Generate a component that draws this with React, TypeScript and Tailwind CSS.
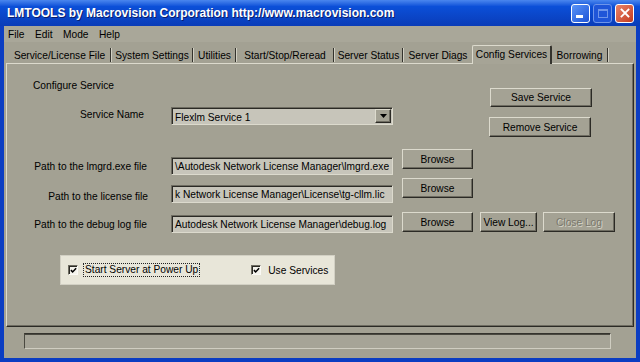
import React from "react";

function Btn({ className, children, disabled }: { className: string; children: React.ReactNode; disabled?: boolean }) {
  return (
    <div
      className={`flex items-center justify-center shrink-0 border border-t-[#dcdacd] border-l-[#dcdacd] border-r-[#2b2a25] border-b-[#2b2a25] shadow-[inset_-1px_-1px_0_#6e6c61] bg-[#a4a294] ${
        disabled ? "text-[#7a786d] [text-shadow:1px_1px_0_#d6d4c7]" : "text-black"
      } ${className}`}
    >
      {children}
    </div>
  );
}

function Field({ className, children }: { className: string; children: React.ReactNode }) {
  return (
    <div
      className={`flex items-center shrink-0 overflow-hidden whitespace-nowrap border border-t-[#6e6c61] border-l-[#6e6c61] border-b-[#dcdacd] border-r-[#dcdacd] shadow-[inset_1px_1px_0_#2b2a25] bg-[#c7c5ba] pl-[3px] ${className}`}
    >
      {children}
    </div>
  );
}

function Check() {
  return (
    <div className="w-[10px] h-[10px] shrink-0 bg-[#f4f3ec] border border-t-[#6e6c61] border-l-[#6e6c61] border-b-[#fbfaf5] border-r-[#fbfaf5] shadow-[inset_1px_1px_0_#2b2a25] flex items-center justify-center">
      <svg viewBox="0 0 8 8" className="w-[7px] h-[7px]">
        <path d="M1 3.6 L3 5.6 L7 1.4" stroke="#000" strokeWidth="1.7" fill="none" />
      </svg>
    </div>
  );
}

const tabs = [
  { label: "Service/License File", w: "w-[103px]", sep: true },
  { label: "System Settings", w: "w-[82px]", sep: true },
  { label: "Utilities", w: "w-[43px]", sep: true },
  { label: "Start/Stop/Reread", w: "w-[98px]", sep: true },
  { label: "Server Status", w: "w-[69px]", sep: true },
  { label: "Server Diags", w: "w-[68px]", sep: false },
];

export default function App() {
  return (
    <div className="w-[640px] h-[362px] flex flex-col bg-[#0b3dc2] font-['Liberation_Sans',Arial,sans-serif] text-[10.2px] leading-[13px] text-black overflow-hidden select-none">
      {/* Title bar */}
      <div className="h-[26px] shrink-0 flex items-center pl-[7px] pr-[6px] bg-linear-to-b from-[#4a86ee] via-[#0b4fd8] via-25% to-[#0a3cb8]">
        <span className="text-white font-bold text-[12px] leading-[14px] [text-shadow:1px_1px_0_#0a1d6b]">
          LMTOOLS by Macrovision Corporation http://www.macrovision.com
        </span>
        <div className="ml-auto flex gap-[3px] items-center">
          <div className="w-[19px] h-[19px] rounded-[3px] border border-white bg-linear-to-br from-[#5a93f7] to-[#1d52d6] flex items-end pl-[4px] pb-[4px]">
            <div className="w-[7px] h-[3px] bg-white" />
          </div>
          <div className="w-[19px] h-[19px] rounded-[3px] border border-[#6e95ea] bg-[#1f55d8] flex items-center justify-center">
            <div className="w-[10px] h-[9px] border border-t-2 border-[#6e95ea]" />
          </div>
          <div className="w-[19px] h-[19px] rounded-[3px] border border-white bg-linear-to-br from-[#e8836a] to-[#c4381b] flex items-center justify-center">
            <svg viewBox="0 0 10 10" className="w-[10px] h-[10px]">
              <path d="M1.5 1.5 L8.5 8.5 M8.5 1.5 L1.5 8.5" stroke="#fff" strokeWidth="1.8" strokeLinecap="square" />
            </svg>
          </div>
        </div>
      </div>

      {/* Body */}
      <div className="flex-1 mx-[4px] mb-[4px] bg-[#a3a193] flex flex-col">
        {/* Menu */}
        <div className="h-[16px] shrink-0 flex items-center pl-[4px] bg-[#a9a799]">
          <span className="w-[27px]">File</span>
          <span className="w-[28px]">Edit</span>
          <span className="w-[36px]">Mode</span>
          <span>Help</span>
        </div>

        {/* Tabs */}
        <div className="h-[21px] shrink-0 flex items-end pl-[5px]">
          {tabs.map((t) => (
            <div key={t.label} className={`h-[16px] flex items-center ${t.w}`}>
              <span className="flex-1 text-center whitespace-nowrap">{t.label}</span>
              {t.sep && <span className="w-[2px] h-[14px] border-l border-l-[#34332d] border-r border-r-[#d2d0c3]" />}
            </div>
          ))}
          <div className="relative z-10 w-[80px] h-[19px] -mb-px flex items-start justify-center pt-[2px] bg-[#a6a496] border-t border-l border-t-[#dcdacd] border-l-[#dcdacd] border-r-2 border-r-[#34332d] rounded-t-[2px]">
            <span className="whitespace-nowrap">Config Services</span>
          </div>
          <div className="h-[16px] w-[57px] flex items-center">
            <span className="flex-1 text-center whitespace-nowrap">Borrowing</span>
            <span className="w-[2px] h-[14px] border-l border-l-[#34332d] border-r border-r-[#d2d0c3]" />
          </div>
        </div>

        {/* Panel */}
        <div className="h-[264px] shrink-0 mx-[2px] flex flex-col border border-t-[#dcdacd] border-l-[#dcdacd] border-r-[#2b2a25] border-b-[#2b2a25] shadow-[inset_-1px_-1px_0_#6e6c61]">
          {/* Top section */}
          <div className="flex">
            <div className="w-[386px] flex flex-col">
              <div className="mt-[15px] pl-[26px]">Configure Service</div>
              <div className="mt-[15px] flex items-start">
                <div className="w-[137px] text-right mt-[1px]">Service Name</div>
                <Field className="ml-[27px] w-[222px] h-[18px]">
                  <span className="pt-[2px]">Flexlm Service 1</span>
                  <div className="ml-auto mr-[1px] w-[16px] h-[14px] flex items-center justify-center border border-t-[#dcdacd] border-l-[#dcdacd] border-r-[#2b2a25] border-b-[#2b2a25] shadow-[inset_-1px_-1px_0_#6e6c61] bg-[#a4a294]">
                    <svg viewBox="0 0 7 4" className="w-[7px] h-[4px]">
                      <path d="M0 0 L7 0 L3.5 4 Z" fill="#000" />
                    </svg>
                  </div>
                </Field>
              </div>
            </div>
            <div className="ml-[97px] pt-[24px] flex flex-col">
              <Btn className="w-[102px] h-[19px]">Save Service</Btn>
              <Btn className="mt-[10px] -ml-px w-[102px] h-[20px]">Remove Service</Btn>
            </div>
          </div>

          {/* Row: lmgrd */}
          <div className="mt-[12px] flex items-start">
            <div className="w-[140px] text-right mt-[11px]">Path to the lmgrd.exe file</div>
            <Field className="ml-[24px] mt-[8px] w-[222px] h-[18px]">\Autodesk Network License Manager\lmgrd.exe</Field>
            <Btn className="ml-[9px] w-[71px] h-[20px]">Browse</Btn>
          </div>

          {/* Row: license */}
          <div className="mt-[3px] flex items-start">
            <div className="w-[141px] text-right mt-[12px]">Path to the license file</div>
            <Field className="ml-[23px] mt-[7px] w-[222px] h-[18px]">k Network License Manager\License\tg-cllm.lic</Field>
            <Btn className="ml-[9px] w-[71px] h-[20px]">Browse</Btn>
          </div>

          {/* Row: debug */}
          <div className="mt-[9px] flex items-start">
            <div className="w-[140px] text-right mt-[6px]">Path to the debug log file</div>
            <Field className="ml-[24px] mt-[3px] w-[222px] h-[18px]">Autodesk Network License Manager\debug.log</Field>
            <Btn className="ml-[9px] w-[71px] h-[20px]">Browse</Btn>
            <Btn className="ml-[7px] w-[57px] h-[20px]">View Log...</Btn>
            <Btn className="ml-[6px] w-[72px] h-[20px]" disabled>
              Close Log
            </Btn>
          </div>

          {/* Checkbox panel */}
          <div className="mt-[22px] ml-[53px] w-[275px] h-[30px] flex items-center pl-[7px] bg-[#e8e6d9] border border-[#d2d0c4]">
            <Check />
            <span className="ml-[5px] px-[1px] border border-dotted border-[#222] leading-[12px] whitespace-nowrap">Start Server at Power Up</span>
            <div className="ml-[51px]">
              <Check />
            </div>
            <span className="ml-[7px] whitespace-nowrap">Use Services</span>
          </div>
        </div>

        {/* Status area */}
        <div className="flex-1 pt-[6px] pl-[20px]">
          <div className="w-[587px] h-[16px] bg-[#a6a497] border border-t-[#34332d] border-l-[#4a4940] border-b-[#cfcdc1] border-r-[#cfcdc1] shadow-[inset_0_1px_0_#4a4940]" />
        </div>
      </div>
    </div>
  );
}
